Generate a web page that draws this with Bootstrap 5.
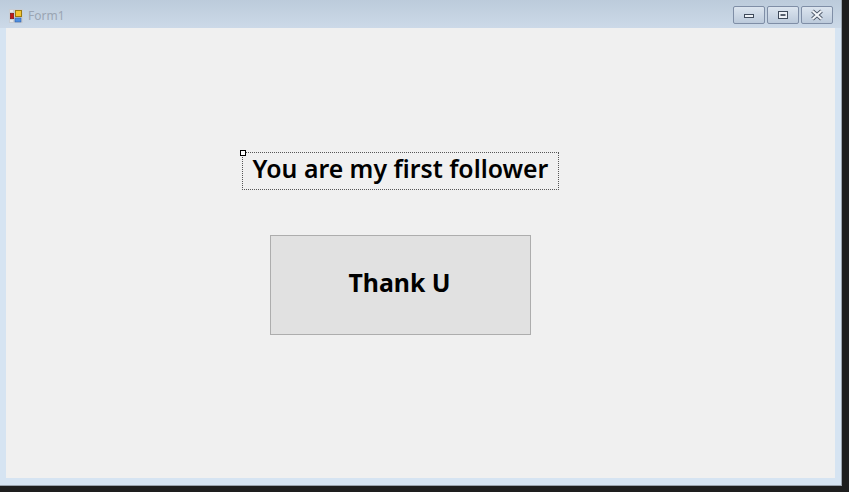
<!DOCTYPE html>
<html lang="en">
<head>
<meta charset="utf-8">
<title>Form1</title>
<link rel="stylesheet" href="https://cdn.jsdelivr.net/npm/bootstrap@5.3.0/dist/css/bootstrap.min.css">
<style>
html,body{height:100%;}
body{background:#1e1e1e;margin:0;overflow:hidden;font-family:"Noto Sans","Open Sans",sans-serif;}
.win-frame{width:842px;height:486px;background:#d6e4f2;border-right:1px solid #9aa3ad;border-bottom:1px solid #9aa3ad;}
.win-title{height:28px;padding:0 2px 0 9px;background:linear-gradient(#bccbdb,#ccd9e8);}
.win-head{padding-top:4px;}
.win-name{font-family:"Noto Sans",sans-serif;font-size:12px;line-height:14px;color:#9aa5b3;margin-left:5px;}
.win-icon{width:14px;height:14px;display:block;}
.win-btns{gap:2px;padding-right:6px;padding-top:1px;}
.win-btn{width:32px;height:18px;border:1px solid #7f8ea6;border-radius:2px;background:linear-gradient(#dce5ef,#bccadb);}
.win-btn svg{display:block;}
.client{margin:0 6px;width:829px;height:450px;background:#f0f0f0;padding:124px 0 0 236px;}
.form-col{width:317px;}
.label-box{height:38px;border:1px dotted #555;font-size:24.8px;font-weight:600;line-height:31px;color:#000;white-space:nowrap;}
.grip{position:absolute;left:-3px;top:-3px;width:6px;height:6px;background:#fff;border:1px solid #000;}
.thank-btn{width:261px;height:100px;margin-top:45px;background:#e1e1e1;border:1px solid #adadad;border-radius:0;color:#000;font-size:24.8px;font-weight:700;padding:0 2px 4px 0;}
.thank-btn:hover{background:#e1e1e1;color:#000;border-color:#adadad;}
</style>
</head>
<body>
<div class="win-frame d-flex flex-column">
  <div class="win-title d-flex align-items-center justify-content-between">
    <div class="win-head d-flex align-items-center">
      <svg class="win-icon" viewBox="0 0 14 14" aria-hidden="true">
        <rect width="14" height="14" fill="#c9cdd3"/>
        <rect x="1" y="1" width="3" height="2" fill="#e4e7ea"/>
        <rect x="1" y="11" width="3" height="2" fill="#e4e7ea"/>
        <rect x="1.300" y="4.300" width="3.400" height="5.400" fill="#c01818" stroke="#7a1010" stroke-width=".6"/>
        <rect x="6.500" y="1.500" width="6" height="6" fill="#f4c430" stroke="#9a7a10" stroke-width="1"/>
        <rect x="6" y="9" width="6" height="4" fill="#4f8fe0" stroke="#2c5ea8" stroke-width=".6"/>
      </svg>
      <span class="win-name">Form1</span>
    </div>
    <div class="win-btns d-flex">
      <div class="win-btn d-flex align-items-center justify-content-center">
        <svg width="12" height="8" viewBox="0 0 12 8" aria-hidden="true"><rect x="1.500" y="3.500" width="9" height="3" fill="#eef2f7" stroke="#3f4a5a"/></svg>
      </div>
      <div class="win-btn d-flex align-items-center justify-content-center">
        <svg width="12" height="10" viewBox="0 0 12 10" aria-hidden="true"><rect x="1.500" y="1.500" width="9" height="7" fill="#eef2f7" stroke="#3f4a5a"/><rect x="3.500" y="4" width="5" height="2" fill="#56606e"/></svg>
      </div>
      <div class="win-btn d-flex align-items-center justify-content-center">
        <svg width="14" height="12" viewBox="0 0 14 12" aria-hidden="true"><path d="M2.500 2 L11.500 10 M11.500 2 L2.500 10" stroke="#4a5566" stroke-width="3.800"/><path d="M2.500 2 L11.500 10 M11.500 2 L2.500 10" stroke="#f2f5f9" stroke-width="2.200"/></svg>
      </div>
    </div>
  </div>
  <div class="client">
    <div class="form-col d-flex flex-column align-items-center">
      <div class="label-box position-relative w-100 text-center">
        <span class="grip"></span>You are my first follower
      </div>
      <button type="button" class="btn thank-btn">Thank U</button>
    </div>
  </div>
</div>
</body>
</html>
